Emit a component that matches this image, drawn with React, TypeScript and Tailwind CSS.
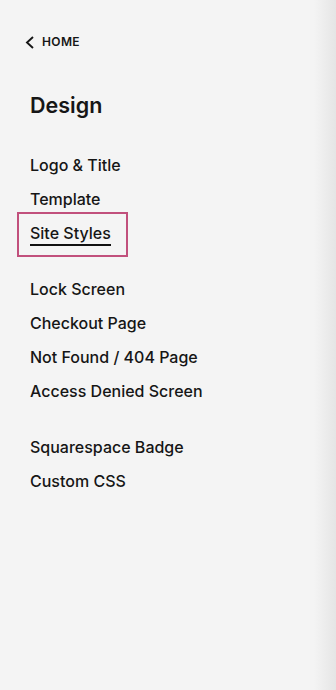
type Item = { label: string; active?: boolean };

const groups: Item[][] = [
  [{ label: 'Logo & Title' }, { label: 'Template' }, { label: 'Site Styles', active: true }],
  [
    { label: 'Lock Screen' },
    { label: 'Checkout Page' },
    { label: 'Not Found / 404 Page' },
    { label: 'Access Denied Screen' },
  ],
  [{ label: 'Squarespace Badge' }, { label: 'Custom CSS' }],
];

function NavItem({ item }: { item: Item }) {
  return (
    <div className="h-[34px] flex items-center">
      <span className="relative inline-block leading-[34px]">
        {item.label}
        {item.active && (
          <>
            <span className="absolute left-0 right-0 top-[28px] h-[2px] bg-[#111]" />
            <span className="absolute -left-[13px] -right-[17px] -top-[4px] -bottom-[7px] border-2 border-[#c1507c]" />
          </>
        )}
      </span>
    </div>
  );
}

export default function App() {
  return (
    <div
      className="relative w-[336px] h-[690px] overflow-hidden bg-[#f4f4f4] text-[#161616]"
      style={{ fontFamily: 'Inter, "Noto Sans", sans-serif' }}
    >
      <div className="pl-[30px] pt-[34px]">
        <div className="flex items-center h-4 -ml-[5px] gap-[7px] text-[12px] font-semibold tracking-[0.03em]">
          <svg width="10" height="13" viewBox="0 0 10 13" fill="none" stroke="currentColor" strokeWidth="1.9">
            <polyline points="8,1 2,6.5 8,12" />
          </svg>
          <span>HOME</span>
        </div>
        <h1 className="mt-[41px] h-7 leading-7 text-[21.5px] font-semibold">Design</h1>
        <div className="mt-[29px] flex flex-col gap-[22px] text-[16px] font-medium">
          {groups.map((g, i) => (
            <div key={i} className="flex flex-col">
              {g.map((item) => (
                <NavItem key={item.label} item={item} />
              ))}
            </div>
          ))}
        </div>
      </div>
      <div className="absolute top-0 right-0 h-full w-[22px] bg-gradient-to-r from-[#f4f4f4] to-[#e5e5e5]" />
    </div>
  );
}
